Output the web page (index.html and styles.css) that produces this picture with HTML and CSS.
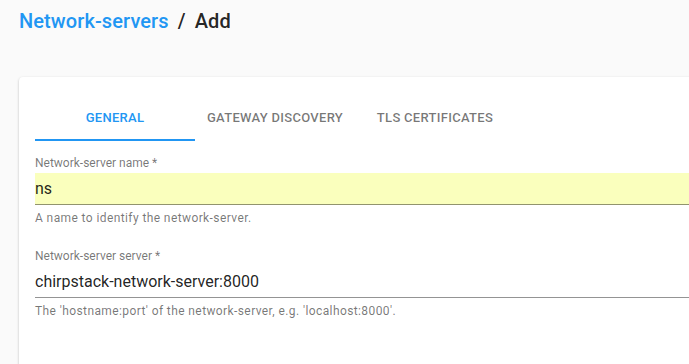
FILE: index.html
```html
<!DOCTYPE html>
<html lang="en">
<head>
    <meta charset="UTF-8">
    <meta name="viewport" content="width=device-width, initial-scale=1.0">
    <title>Network-servers / Add</title>
    <link rel="stylesheet" href="styles.css">
</head>
<body>

<div class="page">
    <!-- Breadcrumb title -->
    <h1 class="title">
        <a href="#" class="crumb-link">Network-servers</a>
        <span class="crumb-sep">/</span>
        <span class="crumb-current">Add</span>
    </h1>

    <div class="card">
        <!-- Tabs -->
        <div class="tabs">
            <div class="tab selected">General</div>
            <div class="tab">Gateway discovery</div>
            <div class="tab">TLS certificates</div>
        </div>

        <form class="form">
            <!-- Network-server name -->
            <div class="field">
                <label class="field-label" for="name">Network-server name *</label>
                <div class="field-input autofilled">
                    <input type="text" id="name" value="ns">
                </div>
                <p class="field-help">A name to identify the network-server.</p>
            </div>

            <!-- Network-server server -->
            <div class="field">
                <label class="field-label" for="server">Network-server server *</label>
                <div class="field-input">
                    <input type="text" id="server" value="chirpstack-network-server:8000">
                </div>
                <p class="field-help">The 'hostname:port' of the network-server, e.g. 'localhost:8000'.</p>
            </div>
        </form>
    </div>
</div>

</body>
</html>
```

FILE: styles.css
```css
/* General Styling */
body {
    font-family: 'Roboto', 'Liberation Sans', sans-serif;
    background-color: #fafafa;
    margin: 0;
    padding: 0;
    color: rgba(0, 0, 0, 0.87);
    overflow: hidden;
}
.page {
    padding-left: 19px;
}
.title {
    margin: 5px 0 0;
    font-size: 20px;
    font-weight: 500;
    line-height: 32px;
    letter-spacing: 0.1px;
    color: rgba(0, 0, 0, 0.87);
}
.crumb-link {
    color: #2196f3;
    text-decoration: none;
}
.crumb-sep {
    margin: 0 4px;
}
/* Card */
.card {
    width: 720px;
    min-height: 400px;
    margin-top: 40px;
    padding: 16px;
    background-color: #fff;
    border-radius: 4px;
    box-shadow: 0 1px 3px 0 rgba(0, 0, 0, 0.2), 0 1px 1px 0 rgba(0, 0, 0, 0.14), 0 2px 1px -1px rgba(0, 0, 0, 0.12);
}
/* Tabs */
.tabs {
    display: flex;
    height: 48px;
}
.tab {
    width: 160px;
    display: flex;
    align-items: center;
    justify-content: center;
    font-size: 13px;
    font-weight: 500;
    letter-spacing: 0.3px;
    text-transform: uppercase;
    color: rgba(0, 0, 0, 0.54);
    box-sizing: border-box;
}
.tab.selected {
    color: #2196f3;
    border-bottom: 2px solid #2196f3;
    padding-top: 2px;
}
/* Form fields */
.field {
    margin-top: 15px;
}
.field + .field {
    margin-top: 24px;
}
.field-label {
    display: block;
    font-size: 12px;
    line-height: 14px;
    color: rgba(0, 0, 0, 0.54);
}
.field-input {
    margin-top: 3px;
    border-bottom: 1px solid rgba(0, 0, 0, 0.42);
}
.field-input.autofilled {
    background-color: #faffbd;
}
.field-input input {
    display: block;
    width: 100%;
    box-sizing: border-box;
    padding: 6px 0;
    border: none;
    outline: none;
    background: transparent;
    font-family: inherit;
    font-size: 16px;
    line-height: 19px;
    height: 31px;
    color: rgba(0, 0, 0, 0.87);
}
.field-help {
    margin: 6px 0 0;
    font-size: 12px;
    line-height: 14px;
    letter-spacing: 0.4px;
    color: rgba(0, 0, 0, 0.54);
}
```
